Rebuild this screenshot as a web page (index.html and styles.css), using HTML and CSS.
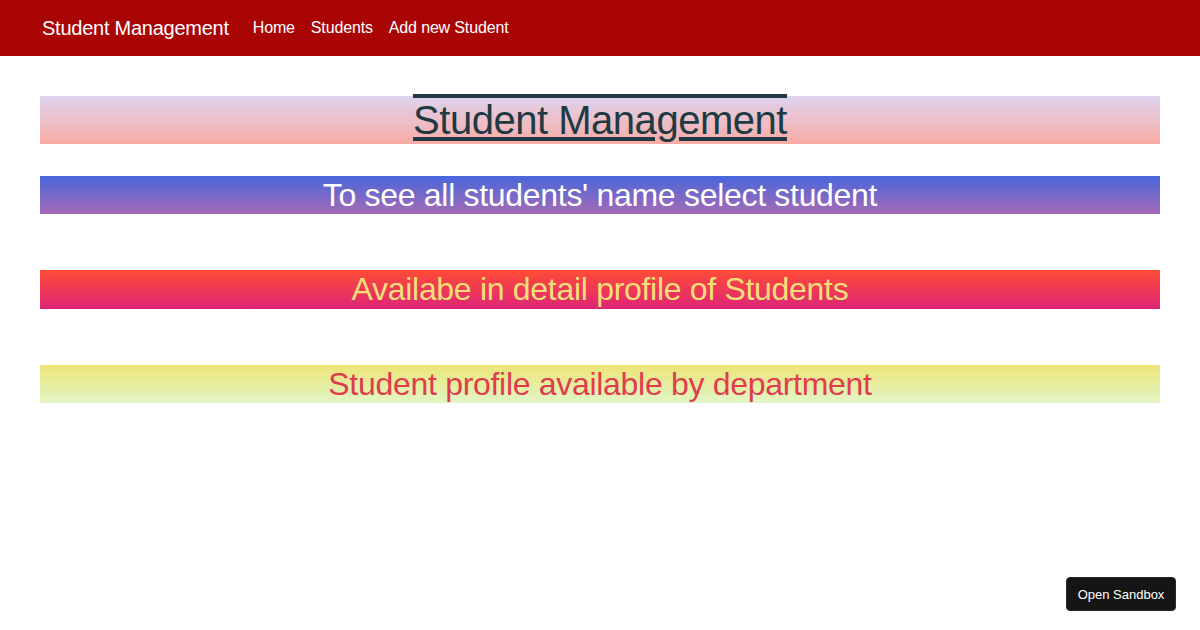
FILE: index.html
```html
<!DOCTYPE html>
<html lang="en">
<head>
<meta charset="utf-8">
<title>Student Management</title>
<link rel="stylesheet" href="styles.css">
</head>
<body>
<nav class="navbar">
  <a class="brand" href="#">Student Management</a>
  <ul class="nav-links">
    <li><a href="#">Home</a></li>
    <li><a href="#">Students</a></li>
    <li><a href="#">Add new Student</a></li>
  </ul>
</nav>
<main class="content">
  <h1 class="title"><span class="title-text">Student Management</span></h1>
  <h2 class="banner banner-blue">To see all students' name select student</h2>
  <h2 class="banner banner-red">Availabe in detail profile of Students</h2>
  <h2 class="banner banner-yellow">Student profile available by department</h2>
</main>
<a class="sandbox-btn" href="#">Open Sandbox</a>
</body>
</html>
```

FILE: styles.css
```css
* { box-sizing: border-box; }

body {
  margin: 0;
  font-family: "Liberation Sans", Arial, sans-serif;
  background: #ffffff;
  color: #212529;
}

.navbar {
  height: 56px;
  background: #a90505;
  display: flex;
  align-items: center;
  padding: 0 40px 0 42px;
}

.brand {
  color: #ffffff;
  text-decoration: none;
  font-size: 20px;
  letter-spacing: -0.25px;
  margin-right: 16px;
}

.nav-links {
  display: flex;
  list-style: none;
  margin: 0;
  padding: 0;
}

.nav-links a {
  display: block;
  color: #ffffff;
  text-decoration: none;
  font-size: 16px;
  letter-spacing: -0.15px;
  padding: 8px;
}

.content {
  padding: 40px 40px 0;
}

.title {
  margin: 0 0 32px;
  text-align: center;
  font-size: 40px;
  line-height: 48px;
  font-weight: 400;
  height: 48px;
  letter-spacing: -0.48px;
  background: linear-gradient(to bottom, #dfd4ef, #f9aba4);
}

.title-text {
  color: #203a43;
  border-top: 4px solid #203a43;
  text-decoration: underline;
  text-decoration-thickness: 4px;
  text-underline-offset: 3px;
}

.banner {
  margin: 0 0 56px;
  text-align: center;
  font-size: 32px;
  line-height: 1.2;
  font-weight: 400;
  letter-spacing: -0.3px;
}

.banner-blue {
  color: #ffffff;
  background: linear-gradient(to bottom, #4867db, #a66ab6);
}

.banner-red {
  color: #f3df79;
  background: linear-gradient(to bottom, #fe4c36, #de2576);
}

.banner-yellow {
  color: #e03c4f;
  background: linear-gradient(to bottom, #ece577, #e1f5c6);
}

.sandbox-btn {
  position: fixed;
  right: 24px;
  bottom: 19px;
  width: 110px;
  height: 34px;
  display: flex;
  align-items: center;
  justify-content: center;
  background: #151515;
  color: #ffffff;
  border-radius: 4px;
  font-size: 13px;
  text-decoration: none;
  border: 1px solid #2a2a2a;
}
```
